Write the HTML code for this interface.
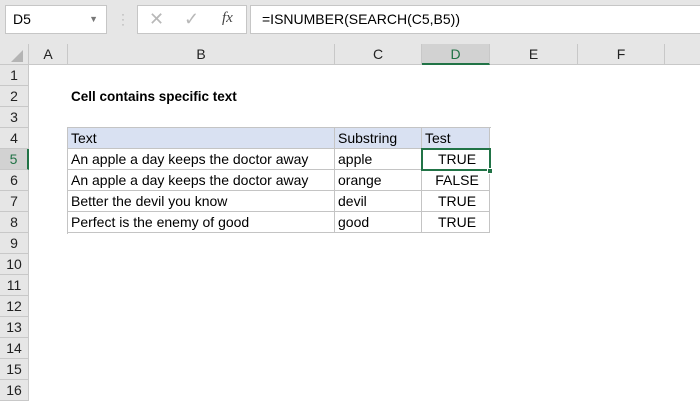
<!DOCTYPE html>
<html><head><style>
*{margin:0;padding:0;box-sizing:border-box}
body{width:700px;height:400px;overflow:hidden;background:#fff;font-family:"Liberation Sans",sans-serif;position:relative}
.top{position:absolute;left:0;top:0;width:700px;height:44px;background:#e6e6e6}
.box{position:absolute;background:#fff;border:1px solid #c6c6c6}
.ch{position:absolute;top:44px;height:21px;background:#e6e6e6;border-right:1px solid #c8c8c8;border-bottom:1px solid #c8c8c8;font-size:14px;color:#222;text-align:center;line-height:21px}
.rh{position:absolute;left:0;width:29px;background:#e6e6e6;border-right:1px solid #c8c8c8;border-bottom:1px solid #c8c8c8;font-size:14px;color:#222;text-align:center}
.c{position:absolute;font-size:14px;color:#000;line-height:21px;padding-left:3px;white-space:nowrap}
.t{border-right:1px solid #c4c4c4;border-bottom:1px solid #c4c4c4}
</style></head><body>
<div class="top"></div>
<div class="box" style="left:5px;top:5px;width:102px;height:29px;font-size:14px;line-height:27px;padding-left:7px">D5<span style="position:absolute;right:8px;top:0;font-size:9px;color:#777">▼</span></div>
<div style="position:absolute;left:121px;top:12px;color:#aaa;font-size:12px;line-height:5px">·<br>·<br>·</div>
<div class="box" style="left:137px;top:5px;width:110px;height:29px"></div>
<div style="position:absolute;left:149px;top:9px;font-size:18px;color:#b8b8b8">✕</div>
<div style="position:absolute;left:184px;top:9px;font-size:18px;color:#b8b8b8">✓</div>
<div style="position:absolute;left:222px;top:10px;font-size:15px;font-style:italic;font-family:'Liberation Serif',serif;color:#444">fx</div>
<div class="box" style="left:250px;top:5px;width:460px;height:29px;font-size:14px;line-height:27px;padding-left:11px">=ISNUMBER(SEARCH(C5,B5))</div>

<div class="ch" style="left:0;width:29px"><svg width="29" height="21"><polygon points="23,6 23,18 11,18" fill="#b4b4b4"/></svg></div>
<div class="ch" style="left:29px;width:39px">A</div>
<div class="ch" style="left:68px;width:267px">B</div>
<div class="ch" style="left:335px;width:87px">C</div>
<div class="ch" style="left:422px;width:68px;background:#d2d2d2;color:#217346;border-bottom:2px solid #217346">D</div>
<div class="ch" style="left:490px;width:88px">E</div>
<div class="ch" style="left:578px;width:87px">F</div>
<div class="ch" style="left:665px;width:40px"></div>

<div id="rows"></div>
<script></script>
<div class="rh" style="top:65px;height:21px;line-height:21px">1</div>
<div class="rh" style="top:86px;height:21px;line-height:21px">2</div>
<div class="rh" style="top:107px;height:21px;line-height:21px">3</div>
<div class="rh" style="top:128px;height:21px;line-height:21px">4</div>
<div class="rh" style="top:149px;height:21px;line-height:21px;background:#d2d2d2;color:#217346;border-right:2px solid #217346">5</div>
<div class="rh" style="top:170px;height:21px;line-height:21px">6</div>
<div class="rh" style="top:191px;height:21px;line-height:21px">7</div>
<div class="rh" style="top:212px;height:21px;line-height:21px">8</div>
<div class="rh" style="top:233px;height:21px;line-height:21px">9</div>
<div class="rh" style="top:254px;height:21px;line-height:21px">10</div>
<div class="rh" style="top:275px;height:21px;line-height:21px">11</div>
<div class="rh" style="top:296px;height:21px;line-height:21px">12</div>
<div class="rh" style="top:317px;height:21px;line-height:21px">13</div>
<div class="rh" style="top:338px;height:21px;line-height:21px">14</div>
<div class="rh" style="top:359px;height:21px;line-height:21px">15</div>
<div class="rh" style="top:380px;height:21px;line-height:21px">16</div>

<div class="c" style="left:68px;top:86px;font-weight:bold;font-size:13.5px">Cell contains specific text</div>

<div style="position:absolute;left:67px;top:127px;width:424px;height:107px;border-left:1px solid #c4c4c4;border-top:1px solid #c4c4c4"></div>
<div class="c t" style="left:68px;top:128px;width:267px;height:21px;background:#d9e1f2">Text</div>
<div class="c t" style="left:335px;top:128px;width:87px;height:21px;background:#d9e1f2">Substring</div>
<div class="c t" style="left:422px;top:128px;width:68px;height:21px;background:#d9e1f2">Test</div>

<div class="c t" style="left:68px;top:149px;width:267px;height:21px">An apple a day keeps the doctor away</div>
<div class="c t" style="left:335px;top:149px;width:87px;height:21px">apple</div>
<div class="c t" style="left:422px;top:149px;width:68px;height:21px;text-align:center">TRUE</div>
<div class="c t" style="left:68px;top:170px;width:267px;height:21px">An apple a day keeps the doctor away</div>
<div class="c t" style="left:335px;top:170px;width:87px;height:21px">orange</div>
<div class="c t" style="left:422px;top:170px;width:68px;height:21px;text-align:center">FALSE</div>
<div class="c t" style="left:68px;top:191px;width:267px;height:21px">Better the devil you know</div>
<div class="c t" style="left:335px;top:191px;width:87px;height:21px">devil</div>
<div class="c t" style="left:422px;top:191px;width:68px;height:21px;text-align:center">TRUE</div>
<div class="c t" style="left:68px;top:212px;width:267px;height:21px">Perfect is the enemy of good</div>
<div class="c t" style="left:335px;top:212px;width:87px;height:21px">good</div>
<div class="c t" style="left:422px;top:212px;width:68px;height:21px;text-align:center">TRUE</div>

<div style="position:absolute;left:421px;top:148px;width:70px;height:23px;border:2px solid #217346"></div>
<div style="position:absolute;left:487px;top:168px;width:6px;height:6px;background:#217346;border:1px solid #fff"></div>
</body></html>
